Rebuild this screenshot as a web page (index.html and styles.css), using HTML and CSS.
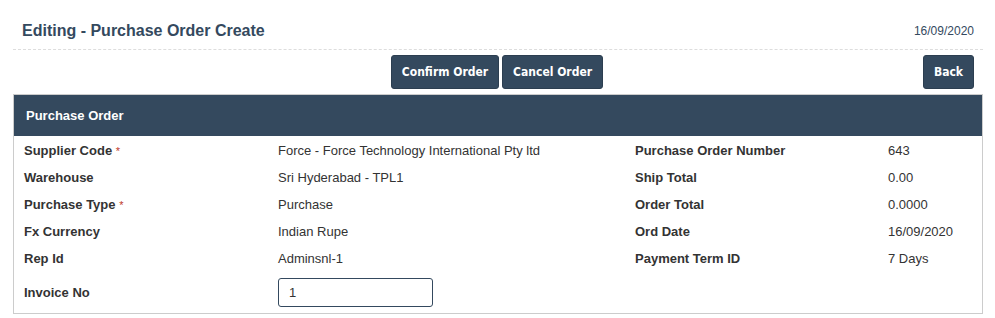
FILE: index.html
```html
<!DOCTYPE html>
<html lang="en">
<head>
  <meta charset="UTF-8">
  <meta name="viewport" content="width=device-width, initial-scale=1.0">
  <title>Purchase Order Create</title>
  <link rel="stylesheet" href="styles.css">
</head>
<body>
  <div class="page">
    <div class="page-header">
      <h1 class="page-title">Editing - Purchase Order Create</h1>
      <span class="page-date">16/09/2020</span>
    </div>

    <div class="toolbar">
      <div class="toolbar-center">
        <button class="btn">Confirm Order</button>
        <button class="btn">Cancel Order</button>
      </div>
      <button class="btn">Back</button>
    </div>

    <!-- Order panel -->
    <div class="panel">
      <div class="panel-heading">Purchase Order</div>
      <div class="panel-body">
        <div class="label">Supplier Code <span class="req">*</span></div>
        <div class="value">Force - Force Technology International Pty ltd</div>
        <div class="label">Purchase Order Number</div>
        <div class="value">643</div>

        <div class="label">Warehouse</div>
        <div class="value">Sri Hyderabad - TPL1</div>
        <div class="label">Ship Total</div>
        <div class="value">0.00</div>

        <div class="label">Purchase Type <span class="req">*</span></div>
        <div class="value">Purchase</div>
        <div class="label">Order Total</div>
        <div class="value">0.0000</div>

        <div class="label">Fx Currency</div>
        <div class="value">Indian Rupe</div>
        <div class="label">Ord Date</div>
        <div class="value">16/09/2020</div>

        <div class="label">Rep Id</div>
        <div class="value">Adminsnl-1</div>
        <div class="label">Payment Term ID</div>
        <div class="value">7 Days</div>

        <div class="label">Invoice No</div>
        <div class="value"><input type="text" class="field" value="1"></div>
        <div></div>
        <div></div>
      </div>
    </div>
  </div>
</body>
</html>
```

FILE: styles.css
```css
/* Basic styling */
body {
  margin: 0;
  padding: 0;
  font-family: "Liberation Sans", Arial, sans-serif;
  font-size: 13px;
  color: #333;
  background: #fff;
}

.page {
  padding: 0 12px 0 13px;
}

/* Header */
.page-header {
  display: flex;
  justify-content: space-between;
  align-items: center;
  height: 50px;
  padding: 0 9px 0 9px;
  border-bottom: 1px dashed #ddd;
  box-sizing: border-box;
}

.page-title {
  margin: 13px 0 0 0;
  font-size: 16px;
  font-weight: bold;
  color: #34495e;
}

.page-date {
  margin-top: 13px;
  font-size: 12px;
  color: #34495e;
}

/* Buttons */
.toolbar {
  display: flex;
  align-items: center;
  padding: 5px 9px 5px 0;
}

.toolbar-center {
  flex: 1;
  display: flex;
  justify-content: center;
  gap: 3px;
  padding-left: 58px;
}

.btn {
  height: 34px;
  padding: 0 10px;
  background-color: #34495e;
  color: #fff;
  border: 1px solid #2c3e50;
  border-radius: 3px;
  font-family: "DejaVu Sans Condensed", "DejaVu Sans", sans-serif;
  font-size: 12px;
  font-weight: bold;
  cursor: pointer;
}

/* Panel */
.panel {
  border: 1px solid #ccc;
}

.panel-heading {
  height: 41px;
  line-height: 41px;
  padding: 0 12px;
  background: #34495e;
  color: #fff;
  font-weight: bold;
}

.panel-body {
  display: grid;
  grid-template-columns: 254px 357px 253px 1fr;
  grid-template-rows: repeat(5, 27px) 41px;
  align-items: center;
  padding: 1px 10px 0 10px;
}

.label {
  font-weight: bold;
  color: #333;
}

.req {
  color: #c0392b;
  font-weight: normal;
  font-size: 11px;
}

.field {
  display: block;
  width: 155px;
  height: 29px;
  box-sizing: border-box;
  padding: 0 10px;
  border: 1px solid #34495e;
  border-radius: 3px;
  font-family: "Liberation Sans", Arial, sans-serif;
  font-size: 13px;
  color: #333;
}
```
